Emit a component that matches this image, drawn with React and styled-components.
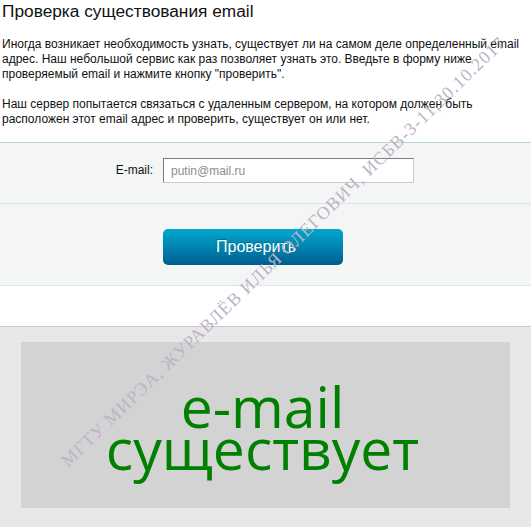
import React from "react";
import styled, { createGlobalStyle } from "styled-components";

const Global = createGlobalStyle`
  html, body { margin: 0; padding: 0; background: #fff; }
  body { font-family: "Liberation Sans", Arial, sans-serif; color: #000; }
`;

const Page = styled.div`
  position: relative;
  width: 531px;
  min-height: 527px;
  overflow: hidden;
`;

const Intro = styled.section`
  padding: 0 2px;
`;

const Title = styled.h1`
  margin: 1px 0 0;
  font-size: 17.3px;
  line-height: 21px;
  font-weight: normal;
  color: #111;
`;

const Para = styled.p`
  margin: 15px 0 0;
  font-size: 12px;
  line-height: 15px;
  color: #111;
`;

const Form = styled.form`
  margin: 15px 0 0;
  background: #f4f6f6;
  border-top: 1px solid #b7d5d5;
  border-bottom: 1px solid #dde6e6;
`;

const Row = styled.div`
  display: grid;
  grid-template-columns: 153px 1fr;
  column-gap: 10px;
  align-items: center;
  padding: ${(p) => p.$pad};
  border-top: ${(p) => (p.$divided ? "1px solid #d6e6e6" : "none")};
`;

const Label = styled.label`
  text-align: right;
  font-size: 12px;
  line-height: 15px;
  color: #111;
`;

const Input = styled.input`
  box-sizing: border-box;
  width: 251px;
  height: 25px;
  margin: 0;
  padding: 0 0 0 7px;
  border: 1px solid;
  border-color: #7b7b7b #cbcbcb #cbcbcb #7b7b7b;
  background: #fff;
  font-family: "Liberation Sans", Arial, sans-serif;
  font-size: 12px;
  outline: none;
  &::placeholder { color: #8c8c8c; opacity: 1; }
`;

const Button = styled.button`
  width: 180px;
  height: 36px;
  margin: 0;
  padding: 0 0 0 6px;
  border: none;
  border-radius: 5px;
  background: linear-gradient(to bottom, #00a7cc 0%, #0084b0 50%, #005d8e 100%);
  color: #fff;
  font-family: "Liberation Sans", Arial, sans-serif;
  font-size: 16px;
  text-shadow: 0 -1px 0 rgba(0, 40, 70, 0.35);
  cursor: pointer;
`;

const Spacer = styled.div`
  height: 40px;
`;

const Result = styled.section`
  border-top: 1px solid #c8c8c8;
  background: #e8e8e8;
  padding: 15px 21px 19px;
`;

const ResultBox = styled.div`
  height: 166px;
  background: #d3d3d3;
  display: flex;
  flex-direction: column;
  align-items: center;
  justify-content: center;
  padding-top: 4px;
  box-sizing: border-box;
  color: #008000;
  font-family: "Open Sans", "DejaVu Sans", sans-serif;
  font-size: 57px;
  line-height: 42px;
  text-align: center;
`;

const Line = styled.div`
  margin-left: -6px;
`;

const Watermark = styled.span`
  position: absolute;
  left: 70px;
  top: 452px;
  white-space: nowrap;
  font-family: "Liberation Serif", "Times New Roman", serif;
  font-size: 18px;
  line-height: 18px;
  letter-spacing: 1px;
  color: #bcb3c6;
  transform-origin: 0 100%;
  transform: rotate(-44deg);
  pointer-events: none;
  user-select: none;
`;

export default function App() {
  return (
    <Page>
      <Global />
      <Intro>
        <Title>Проверка существования email</Title>
        <Para>
          Иногда возникает необходимость узнать, существует ли на самом деле определенный email
          адрес. Наш небольшой сервис как раз позволяет узнать это. Введьте в форму ниже
          проверяемый email и нажмите кнопку "проверить".
        </Para>
        <Para>
          Наш сервер попытается связаться с удаленным сервером, на котором должен быть
          расположен этот email адрес и проверить, существует он или нет.
        </Para>
      </Intro>
      <Form onSubmit={(e) => e.preventDefault()}>
        <Row $pad="15px 0 20px">
          <Label htmlFor="email">E-mail:</Label>
          <div>
            <Input id="email" type="text" placeholder="putin@mail.ru" />
          </div>
        </Row>
        <Row $pad="25px 0 20px" $divided>
          <span />
          <div>
            <Button type="submit">Проверить</Button>
          </div>
        </Row>
      </Form>
      <Spacer />
      <Result>
        <ResultBox>
          <Line>e-mail</Line>
          <Line>существует</Line>
        </ResultBox>
      </Result>
      <Watermark>МГТУ МИРЭА, ЖУРАВЛЁВ ИЛЬЯ ОЛЕГОВИЧ, ИСБВ-3-11,30.10.2017</Watermark>
    </Page>
  );
}
